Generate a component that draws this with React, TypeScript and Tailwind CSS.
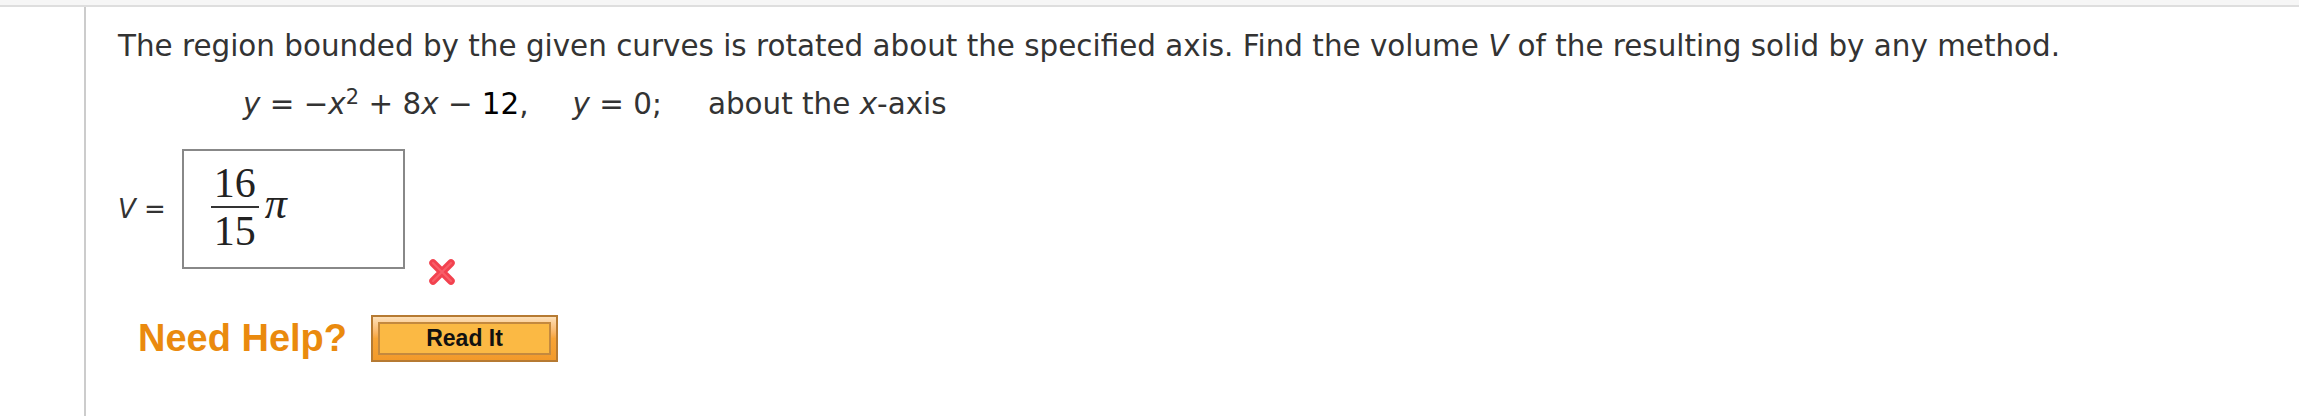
const TEXT = "font-['DejaVu_Sans','Verdana',sans-serif]";

function WrongMark() {
  return (
    <svg width="32" height="32" viewBox="0 0 32 32" className="blur-[0.6px]">
      <path d="M7 7 L25 25 M25 7 L7 25" stroke="#f2424f" strokeWidth="7.5" strokeLinecap="round" />
      <path d="M7 7 L25 25 M25 7 L7 25" stroke="#ff7a82" strokeWidth="2" strokeLinecap="round" opacity="0.5" />
    </svg>
  );
}

function ReadItButton() {
  return (
    <button className="h-[47px] w-[187px] border-2 border-[#b67a32] bg-gradient-to-b from-[#fde0b8] via-[#f8a437] to-[#f29a2a] p-[5px]">
      <span className="flex h-full w-full items-center justify-center border-2 border-[#c4893e] bg-[#fbb944] font-['Liberation_Sans',Arial,sans-serif] text-[23px] font-bold leading-none text-[#111]">
        Read It
      </span>
    </button>
  );
}

export default function App() {
  return (
    <div className="min-h-[416px] w-full bg-white">
      <div className="h-[7px] border-b-2 border-[#dedede] bg-[#f6f6f6]" />
      <div className="flex min-h-[409px]">
        <div className="w-[84px] shrink-0" />
        <div className={`flex-1 border-l-2 border-[#cccccc] pl-[32px] pt-[22px] ${TEXT} text-[#333333]`}>
          <p className="text-[29.4px] leading-[34px]">
            The region bounded by the given curves is rotated about the specified axis. Find the volume <i>V</i> of the resulting solid by any method.
          </p>

          {/* curves */}
          <div className="mt-[24px] flex pl-[125px] text-[29.4px] leading-[34px]">
            <span>
              <i>y</i> = −<i>x</i>
              <sup className="text-[21px]">2</sup> + 8<i>x</i> − <span className="text-black">12</span>,
            </span>
            <span className="ml-[44px]">
              <i>y</i> = 0;
            </span>
            <span className="ml-[46px]">
              about the <i>x</i>-axis
            </span>
          </div>

          {/* answer */}
          <div className="mt-[28px] flex items-start">
            <div className="flex h-[120px] items-center">
              <span className="text-[26px]">
                <i>V</i> =
              </span>
            </div>
            <div className="ml-[16px] flex h-[120px] w-[223px] items-center border-2 border-[#888888] pb-[4px] pl-[27px] font-['Liberation_Serif','Times_New_Roman',serif] text-[#222]">
              <div className="flex flex-col items-center">
                <span className="text-[42px] leading-[40px]">16</span>
                <span className="my-[3px] h-[2px] w-[48px] bg-[#333]" />
                <span className="text-[42px] leading-[40px]">15</span>
              </div>
              <span className="mb-[6px] ml-[6px] text-[44px] italic leading-none">π</span>
            </div>
            <div className="ml-[21px] mt-[107px]">
              <WrongMark />
            </div>
          </div>

          {/* help */}
          <div className="mt-[22px] flex items-center pl-[20px]">
            <span className="font-['Liberation_Sans',Arial,sans-serif] text-[38px] font-bold text-[#ea8a0e]">
              Need Help?
            </span>
            <span className="ml-[24px]">
              <ReadItButton />
            </span>
          </div>
        </div>
      </div>
    </div>
  );
}
